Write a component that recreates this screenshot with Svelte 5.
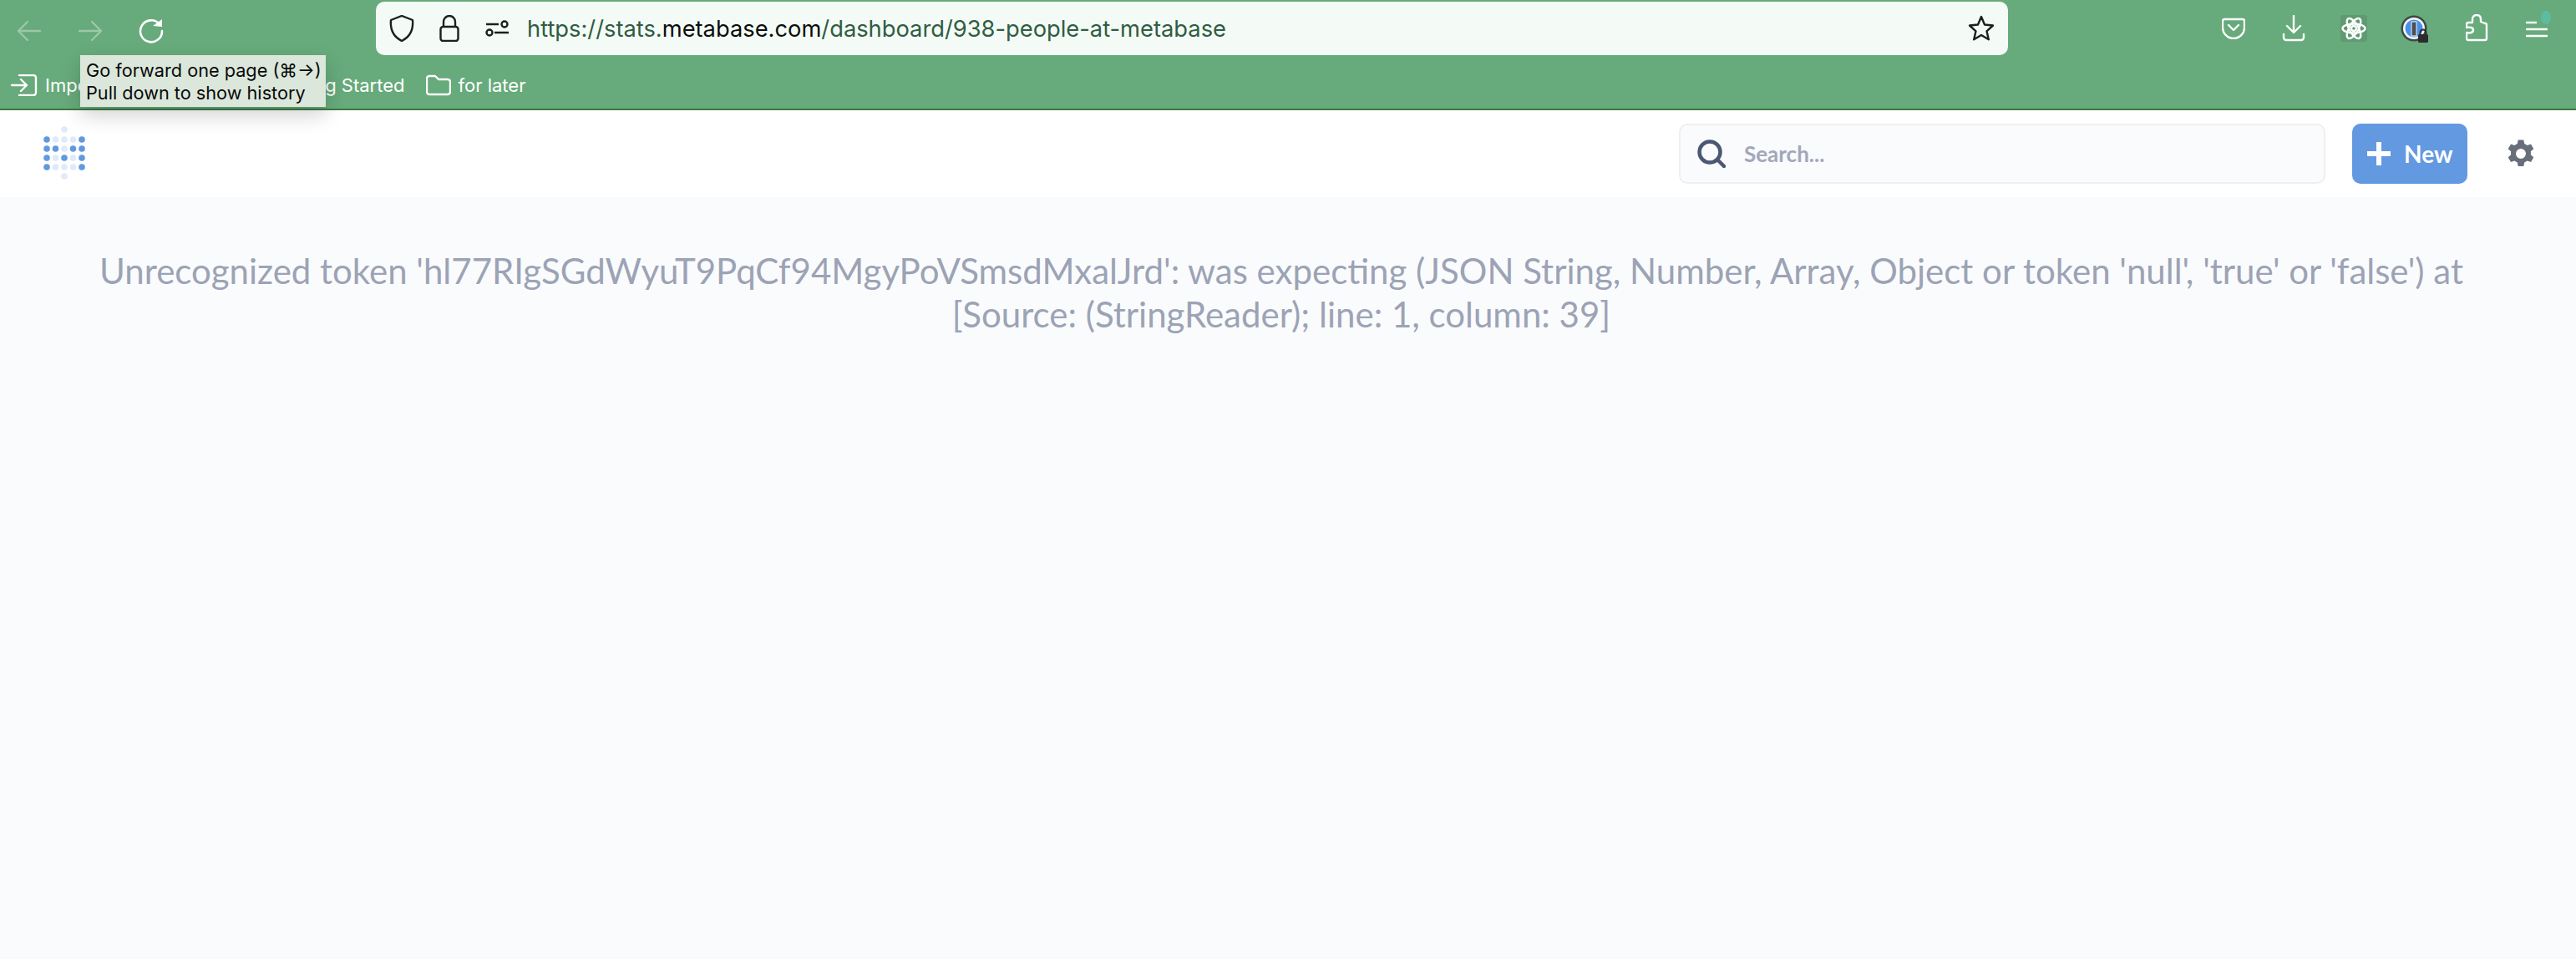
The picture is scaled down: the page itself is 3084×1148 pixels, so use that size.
<script>
	// dark dots of the logo, by row and column
	const dark = new Set(['1-0', '1-4', '2-0', '2-1', '2-3', '2-4', '3-0', '3-2', '3-4', '4-0', '4-4']);
	const dots = [];
	const rowY = [8, 20, 31, 42, 53];
	rowY.forEach((y, r) => {
		[0, 10.5, 21, 31.5, 42].forEach((x, c) => {
			if (r === 0 && c !== 2) return;
			dots.push({ x: x + 4, y, dark: dark.has(`${r}-${c}`) });
		});
	});
	dots.push({ x: 25, y: 64, dark: false });
</script>

<div class="page">
	<header class="browser">
		<div class="toolbar">
			<div class="nav-buttons">
				<svg class="ic dim" width="30" height="30" viewBox="0 0 30 30"><path d="M28 15H2M13 4 2 15l11 11" /></svg>
				<svg class="ic dim" width="30" height="30" viewBox="0 0 30 30"><path d="M2 15h26M17 4l11 11-11 11" /></svg>
				<svg class="ic" width="30" height="30" viewBox="0 0 30 30"><path d="M25 7A13 13 0 1 0 28 15" stroke-width="2.6" /><path class="solid" d="M17 9 28 10 28 1Z" /></svg>
			</div>
			<div class="urlbar">
				<svg class="ub" width="30" height="32" viewBox="0 0 30 32"><path d="M15 1 28 6c1 11-3 20-13 25C5 26 1 17 2 6Z" stroke-linejoin="round" /></svg>
				<svg class="ub" width="26" height="32" viewBox="0 0 26 32"><rect x="2.500" y="14" width="21" height="17" rx="3" /><path d="M6 14V8a7 7 0 0 1 14 0v6" /></svg>
				<svg class="ub" width="30" height="20" viewBox="0 0 30 20"><path d="M2 5h15M12 15h17" /><circle cx="24" cy="5" r="3.500" /><circle cx="6" cy="15" r="3.500" /></svg>
				<span class="url">https://stats.<b>metabase.com</b>/dashboard/938-people-at-metabase</span>
				<svg class="ub star" width="32" height="32" viewBox="0 0 32 32"><path d="M16 2l4 9.500 10 1-7.500 6.800 2.300 10L16 24l-8.800 5.300 2.300-10L2 12.500l10-1Z" stroke-linejoin="round" /></svg>
			</div>
			<div class="tools">
				<svg class="ic" width="28" height="26" viewBox="0 0 28 26"><path d="M3 2h22a2 2 0 0 1 2 2v8a13 13 0 0 1-26 0V4a2 2 0 0 1 2-2Z" /><path d="M8 9l6 6 6-6" /></svg>
				<svg class="ic" width="28" height="32" viewBox="0 0 28 32"><path d="M14 1v20M6 13l8 8 8-8M2 23v4a3 3 0 0 0 3 3h18a3 3 0 0 0 3-3v-4" /></svg>
				<div class="react">
					<svg class="ic" width="30" height="30" viewBox="0 0 30 30" stroke-width="1.500">
						<ellipse cx="15" cy="15" rx="13.500" ry="5.500" />
						<ellipse cx="15" cy="15" rx="13.500" ry="5.500" transform="rotate(60 15 15)" />
						<ellipse cx="15" cy="15" rx="13.500" ry="5.500" transform="rotate(120 15 15)" />
						<circle cx="15" cy="15" r="3" />
					</svg>
				</div>
				<svg class="onepass" width="34" height="34" viewBox="0 0 34 34">
					<circle cx="16" cy="17" r="15.500" fill="#3c4a42" />
					<circle cx="16" cy="17" r="13" fill="#f4f8fd" />
					<circle cx="16" cy="17" r="10.500" fill="#4a90e8" />
					<rect x="13" y="9" width="6" height="17" fill="#4c4f52" stroke="#f4f8fd" stroke-width="1" />
					<rect x="21" y="24" width="12" height="10" rx="1.500" fill="#2c2c2e" />
					<path d="M23.500 24v-2a3.500 3.500 0 0 1 7 0v2" fill="none" stroke="#2c2c2e" stroke-width="2" />
				</svg>
				<svg class="ic" width="28" height="34" viewBox="0 0 28 34"><path d="M3 10h5V6c0-3 2-5 5-5s5 2 5 5v3l5 2a2 2 0 0 1 2 2v16a2 2 0 0 1-2 2H3a2 2 0 0 1-2-2v-7c4 1 8 0 8-3s-4-4-8-3v-4a2 2 0 0 1 2-2Z" /></svg>
				<div class="menu">
					<svg class="ic" width="26" height="22" viewBox="0 0 26 22"><path d="M1 4h11M1 12h24M1 20h24" stroke-width="2.600" /></svg>
					<span class="badge"></span>
				</div>
			</div>
		</div>
		<div class="bookmarks">
			<div class="bm">
				<svg class="ic" width="32" height="26" viewBox="0 0 32 26"><path d="M1 13h18M12 6l7 7-7 7M10 1h17a3 3 0 0 1 3 3v18a3 3 0 0 1-3 3H10" /></svg>
				<span>Import bookmarks...</span>
			</div>
			<div class="bm">
				<svg class="ic" width="28" height="24" viewBox="0 0 28 24"><path d="M2 4h24v18H2Z" /></svg>
				<span>Getting Started</span>
			</div>
			<div class="bm later">
				<svg class="ic" width="30" height="26" viewBox="0 0 30 26"><path d="M1 5a3 3 0 0 1 3-3h7l4 4h11a3 3 0 0 1 3 3v12a3 3 0 0 1-3 3H4a3 3 0 0 1-3-3Z" /></svg>
				<span>for later</span>
			</div>
		</div>
		<div class="tooltip">Go forward one page (⌘→)<br />Pull down to show history</div>
	</header>

	<nav class="appbar">
		<svg class="logo" width="54" height="72" viewBox="0 0 54 72">
			{#each dots as d}
				<circle cx={d.x} cy={d.y} r="3.800" fill={d.dark ? '#6199e0' : '#dfeafa'} />
			{/each}
		</svg>
		<div class="search">
			<svg width="34" height="34" viewBox="0 0 34 34"><circle cx="15" cy="15" r="12.500" /><path d="M24 24l8 8" /></svg>
			<span>Search...</span>
		</div>
		<button class="new">
			<svg width="28" height="28" viewBox="0 0 28 28"><path d="M14 0v28M0 14h28" /></svg>
			New
		</button>
		<svg class="gear" width="36" height="36" viewBox="0 0 24 24"><path fill-rule="evenodd" d="M14.200 1l.6 3 2.300 1.300 2.900-1 2.200 3.800-2.300 2c.1.900.1 1.900 0 2.800l2.300 2-2.200 3.800-2.900-1-2.300 1.300-.6 3H9.800l-.6-3-2.300-1.300-2.900 1-2.200-3.800 2.300-2a10 10 0 0 1 0-2.800l-2.300-2 2.200-3.800 2.900 1 2.300-1.300.6-3ZM12 8a4 4 0 1 0 0 8 4 4 0 0 0 0-8Z" /></svg>
	</nav>

	<main class="content">
		<p>Unrecognized token 'hl77RIgSGdWyuT9PqCf94MgyPoVSmsdMxalJrd': was expecting (JSON String, Number, Array, Object or token 'null', 'true' or 'false') at [Source: (StringReader); line: 1, column: 39]</p>
	</main>
</div>

<style>
	:global(body) {
		margin: 0;
		background: #fafbfd;
	}

	.page {
		width: 3084px;
		height: 1148px;
		overflow: hidden;
		display: flex;
		flex-direction: column;
		font-family: Lato, sans-serif;
	}

	.browser {
		position: relative;
		background: #67aa7b;
		border-bottom: 2px solid #3b7a45;
		height: 130px;
		font-family: Inter, "Liberation Sans", sans-serif;
	}

	.ic {
		fill: none;
		stroke: #fff;
		stroke-width: 2.400;
		stroke-linecap: round;
		stroke-linejoin: round;
		flex: none;
	}

	.ic .solid {
		fill: #fff;
		stroke: none;
	}

	.ic.dim {
		opacity: 0.35;
	}

	.toolbar {
		display: flex;
		align-items: flex-start;
		height: 68px;
		padding: 2px 0 0 20px;
	}

	.nav-buttons {
		display: flex;
		gap: 43px;
		width: 430px;
		padding-top: 20px;
	}

	.urlbar {
		width: 1954px;
		height: 64px;
		box-sizing: border-box;
		background: #f4faf6;
		border-radius: 10px;
		display: flex;
		align-items: center;
		padding: 0 16px;
		gap: 29px;
	}

	.ub {
		fill: none;
		stroke: #1d1f1e;
		stroke-width: 2.400;
		flex: none;
	}

	.url {
		font-size: 27.300px;
		color: #2f5d42;
		white-space: nowrap;
		margin-left: -8px;
	}

	.url b {
		font-weight: 400;
		color: #0b0f0c;
	}

	.star {
		margin-left: auto;
	}

	.tools {
		display: flex;
		align-items: center;
		height: 64px;
		padding-left: 256px;
		gap: 44px;
	}

	.react {
		width: 32px;
		height: 32px;
		background: #5f9a71;
		border-radius: 3px;
		display: flex;
		align-items: center;
		justify-content: center;
		margin: 0 -4px 0 -2px;
	}

	.menu {
		position: relative;
		display: flex;
	}

	.badge {
		position: absolute;
		right: -4px;
		top: -10px;
		width: 12px;
		height: 16px;
		border-radius: 50%;
		background: #5fbb9f;
	}

	.bookmarks {
		display: flex;
		align-items: center;
		height: 64px;
		padding-left: 13px;
		font-size: 22px;
		color: #fff;
		gap: 28px;
	}

	.bm {
		display: flex;
		align-items: center;
		gap: 9px;
		white-space: nowrap;
	}

	.later {
		margin-left: -3px;
	}

	.tooltip {
		position: absolute;
		left: 96px;
		top: 66px;
		width: 294px;
		height: 62px;
		box-sizing: border-box;
		padding: 5px 7px;
		background: #dbe7db;
		color: #0a0a0a;
		font-size: 21.700px;
		line-height: 27px;
		white-space: nowrap;
		box-shadow: 0 10px 24px rgba(0, 0, 0, 0.18);
		z-index: 2;
	}

	.appbar {
		height: 104px;
		background: #fff;
		display: flex;
		align-items: center;
		padding-left: 50px;
		padding-right: 48px;
		flex: none;
	}

	.logo {
		margin: -2px auto 0 2px;
	}

	.search {
		width: 774px;
		height: 72px;
		box-sizing: border-box;
		border: 2px solid #eeeff1;
		border-radius: 10px;
		background: #f9fbfd;
		display: flex;
		align-items: center;
		padding-left: 20px;
		gap: 22px;
		font-size: 26px;
		font-weight: 700;
		color: #a3a8b9;
	}

	.search svg {
		fill: none;
		stroke: #4c5773;
		stroke-width: 4.500;
		stroke-linecap: round;
	}

	.new {
		width: 138px;
		height: 72px;
		margin-left: 32px;
		border: 0;
		border-radius: 10px;
		background: #6399e0;
		color: #fff;
		font-family: Lato, sans-serif;
		font-size: 28px;
		font-weight: 700;
		display: flex;
		align-items: center;
		gap: 16px;
		padding: 0 0 0 18px;
	}

	.new svg {
		stroke: #fff;
		stroke-width: 6;
	}

	.gear {
		margin-left: 46px;
		fill: #696e7b;
	}

	.content {
		flex: 1;
		background: #fafbfd;
		padding-top: 62px;
	}

	.content p {
		margin: 0 0 0 94px;
		width: 2880px;
		text-align: center;
		font-size: 42px;
		line-height: 52px;
		font-weight: 400;
		color: #9ca3b5;
	}
</style>
